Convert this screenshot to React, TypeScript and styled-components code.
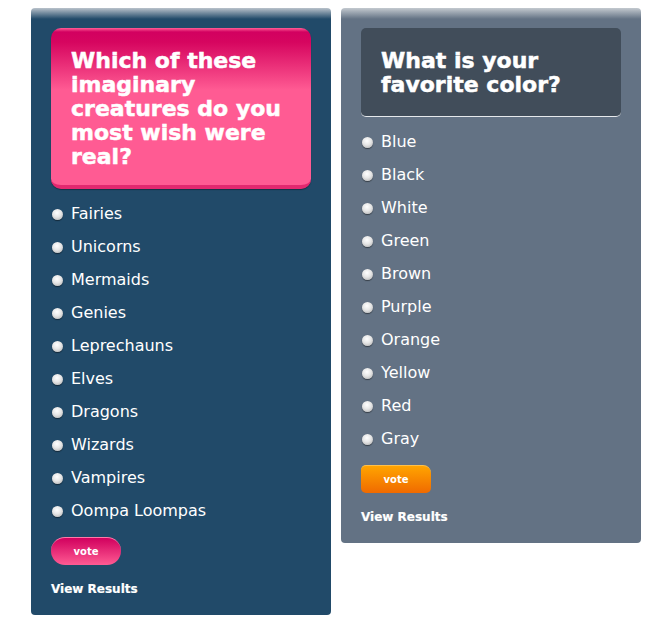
import React from "react";
import styled, { createGlobalStyle, css } from "styled-components";

const GlobalStyle = createGlobalStyle`
  html, body {
    margin: 0;
    padding: 0;
    background: #ffffff;
  }
  body {
    font-family: "DejaVu Sans", Verdana, sans-serif;
  }
`;

type Tone = "pink" | "slate";

const Page = styled.main`
  display: flex;
  align-items: flex-start;
  gap: 10px;
  padding: 8px 0 0 31px;
`;

const PollPanel = styled.section<{ $tone: Tone }>`
  width: 300px;
  box-sizing: border-box;
  padding: 20px 20px 18px;
  border-radius: 4px;
  background: ${({ $tone }) =>
    $tone === "pink"
      ? "linear-gradient(#b9c2cb 0px, #214a69 11px)"
      : "linear-gradient(#c3c9cf 0px, #637284 11px)"};
`;

const Question = styled.h2<{ $tone: Tone }>`
  margin: 0;
  font-size: 22px;
  line-height: 24px;
  font-weight: bold;
  color: #ffffff;
  -webkit-text-stroke: 0.5px #ffffff;
  border-radius: 10px;
  ${({ $tone }) =>
    $tone === "pink"
      ? css`
          padding: 21px 20px 16px;
          background: linear-gradient(
            #ff5d95 0px,
            #d20060 4px,
            #d6055f 14px,
            #ff5b93 62px,
            #ff5b93 100%
          );
          border-bottom: 4px solid #e3286f;
          box-shadow: 0 1px 1px rgba(0, 0, 0, 0.35);
        `
      : css`
          padding: 21px 20px 19px;
          background: #414d5a;
          border-bottom: 1px solid #e6e9ec;
          border-radius: 5px;
        `}
`;

const Options = styled.ul`
  list-style: none;
  margin: 8px 0 0;
  padding: 0;
`;

const Option = styled.li`
  height: 33px;
  display: flex;
  align-items: center;
  gap: 8px;
  font-size: 16px;
  color: #ffffff;
`;

const Radio = styled.input.attrs({ type: "radio" })`
  appearance: none;
  margin: 2px 0 0 1px;
  width: 11px;
  height: 11px;
  border-radius: 50%;
  background: radial-gradient(circle at 45% 35%, #ffffff 0%, #e6e6e6 45%, #a9a9a9 100%);
  box-shadow: 0 1px 1px rgba(0, 0, 0, 0.45);
  flex: none;
`;

const VoteButton = styled.button<{ $tone: Tone }>`
  display: block;
  margin-top: 10px;
  width: 70px;
  height: 28px;
  border: none;
  padding: 0;
  font-family: "DejaVu Sans", Verdana, sans-serif;
  font-size: 10px;
  font-weight: bold;
  color: #ffffff;
  ${({ $tone }) =>
    $tone === "pink"
      ? css`
          border-radius: 14px;
          background: linear-gradient(#d1005e 0%, #ff5b93 100%);
          border-top: 1px solid #ff7aa8;
        `
      : css`
          border-radius: 5px 8px 5px 5px;
          background: linear-gradient(#ffa400 0%, #f06a00 100%);
          border-top: 1px solid #ffc04a;
        `}
`;

const ResultsLink = styled.a`
  display: block;
  margin-top: 16px;
  font-size: 12px;
  line-height: 16px;
  font-weight: bold;
  color: #ffffff;
  -webkit-text-stroke: 0.2px #ffffff;
  text-decoration: none;
`;

interface Poll {
  id: string;
  tone: Tone;
  question: React.ReactNode;
  answers: string[];
}

const polls: Poll[] = [
  {
    id: "creatures",
    tone: "pink",
    question: (
      <>
        Which of these
        <br />
        imaginary
        <br />
        creatures do you
        <br />
        most wish were
        <br />
        real?
      </>
    ),
    answers: [
      "Fairies",
      "Unicorns",
      "Mermaids",
      "Genies",
      "Leprechauns",
      "Elves",
      "Dragons",
      "Wizards",
      "Vampires",
      "Oompa Loompas",
    ],
  },
  {
    id: "color",
    tone: "slate",
    question: (
      <>
        What is your
        <br />
        favorite color?
      </>
    ),
    answers: [
      "Blue",
      "Black",
      "White",
      "Green",
      "Brown",
      "Purple",
      "Orange",
      "Yellow",
      "Red",
      "Gray",
    ],
  },
];

const App: React.FC = () => {
  return (
    <>
      <GlobalStyle />
      <Page>
        {polls.map((poll) => (
          <PollPanel key={poll.id} $tone={poll.tone}>
            <Question $tone={poll.tone}>{poll.question}</Question>
            <Options>
              {poll.answers.map((answer) => (
                <Option key={answer}>
                  <Radio name={poll.id} />
                  {answer}
                </Option>
              ))}
            </Options>
            <VoteButton $tone={poll.tone}>vote</VoteButton>
            <ResultsLink href="#">View Results</ResultsLink>
          </PollPanel>
        ))}
      </Page>
    </>
  );
};

export default App;
